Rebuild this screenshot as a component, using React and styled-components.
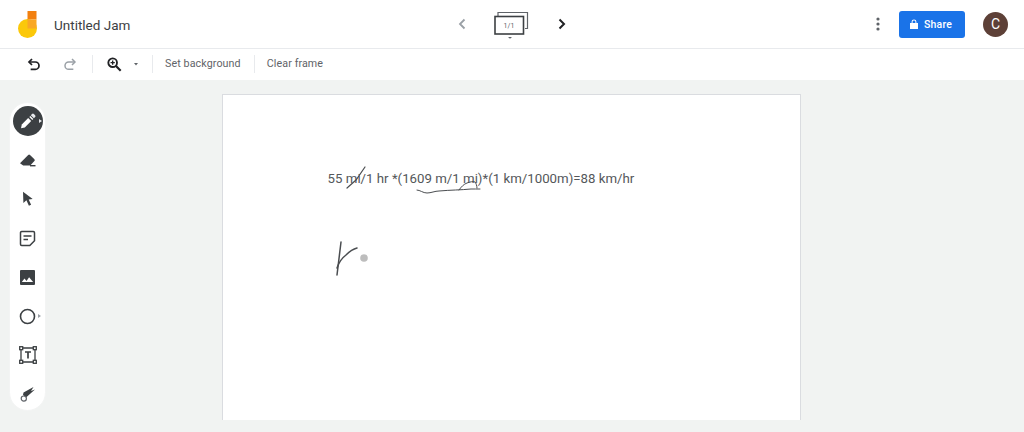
import React from "react";
import styled, { createGlobalStyle } from "styled-components";

const Global = createGlobalStyle`
  html, body { margin: 0; padding: 0; background: #f1f3f2; }
  body { font-family: Roboto, "Liberation Sans", sans-serif; overflow: hidden; }
`;
const Page = styled.div`
  width: 1024px; height: 432px; display: flex; flex-direction: column; overflow: hidden;
`;
const Header = styled.header`
  height: 48px; flex: none; background: #fff; border-bottom: 1px solid #e8eaed;
  display: grid; grid-template-columns: 1fr auto 1fr; align-items: center;
`;
const Brand = styled.div`display: flex; align-items: center; padding-left: 18px;`;
const Title = styled.div`font-size: 13.5px; color: #3c4043; margin-left: 17px; line-height: 20px; margin-top: 1px;`;
const Pager = styled.div`display: flex; align-items: center; margin-right: 1px;`;
const Right = styled.div`display: flex; align-items: center; justify-content: flex-end; padding-right: 16px;`;
const ShareButton = styled.div`
  width: 66px; height: 27px; border-radius: 3px; background: #1a73e8; color: #fff; box-sizing: border-box;
  display: flex; align-items: center; justify-content: center; gap: 6px; padding-right: 2px;
  font-size: 10.5px; font-weight: 500; letter-spacing: .2px; margin-left: 19px;
`;
const Avatar = styled.div`
  width: 25px; height: 25px; border-radius: 50%; background: #5d4037; color: #fff;
  display: flex; align-items: center; justify-content: center; font-size: 14px; margin-left: 18px;
`;
const Toolbar = styled.div`
  height: 31px; flex: none; background: #fff; display: flex; align-items: center; padding-left: 24px;
  padding-bottom: 1px; box-sizing: border-box;
`;
const ToolIcon = styled.div`
  width: ${p => p.$w || 20}px; display: flex; justify-content: center; align-items: center;
  margin-right: ${p => p.$mr || 0}px;
`;
const Divider = styled.div`width: 1px; height: 18px; background: #e8eaed; margin: 0 ${p => p.$r ?? 12}px 0 ${p => p.$l ?? 12}px;`;
const TextAction = styled.div`font-size: 10.7px; color: #5f6368; letter-spacing: .1px; line-height: 16px;`;
const Workspace = styled.main`
  flex: 1; display: flex; align-items: flex-start; background: #f1f3f2; min-height: 0;
`;
const Dock = styled.aside`
  width: 37px; height: 309px; margin: 22px 0 0 9px; flex: none; background: #fff;
  border-radius: 19px; display: flex; flex-direction: column; align-items: center;
  box-sizing: border-box; border: 1px solid #f3f4f4;
`;
const DockItem = styled.div`
  position: relative; width: 30px; height: 30px; margin-top: ${p => p.$first ? 3 : 9}px;
  border-radius: 50%; background: ${p => p.$active ? "#3c4043" : "transparent"};
  display: flex; align-items: center; justify-content: center; flex: none;
`;
const Caret = styled.span`
  position: absolute; right: ${p => p.$r ?? -1}px; top: 13px; width: 0; height: 0;
  border-left: 3px solid ${p => p.$c || "#9aa0a6"}; border-top: 2px solid transparent; border-bottom: 2px solid transparent;
`;
const Canvas = styled.section`
  position: relative; width: 577px; height: 325px; margin: 14px 0 0 176px; flex: none;
  background: #fff; border: 1px solid #dadce0; border-bottom: none; box-sizing: content-box;
`;
const Note = styled.div`
  position: absolute; left: 104.6px; top: 75px; white-space: nowrap;
  font-size: 13.26px; line-height: 18px; color: #54575a;
`;
const Ink = styled.svg`position: absolute; left: 0; top: 0; pointer-events: none;`;

const Logo = () => (
  <svg width="19" height="28" viewBox="0 0 19 28">
    <circle cx="9.5" cy="18.5" r="9.5" fill="#fbc80a" />
    <rect x="9.5" y="1" width="9" height="8.5" fill="#f2800f" />
    <rect x="9.5" y="9.5" width="9" height="9" fill="#f9a825" />
  </svg>
);
const Undo = ({ c }) => (
  <svg width="16" height="16" viewBox="0 0 24 24" fill="none" stroke={c} strokeWidth="2.6">
    <path d="M9 4.5 4.5 9 9 13.5" /><path d="M5 9h9a5.5 5.5 0 0 1 0 11H7" />
  </svg>
);
const Redo = ({ c }) => (
  <svg width="16" height="16" viewBox="0 0 24 24" fill="none" stroke={c} strokeWidth="2.2">
    <path d="M15 4.5 19.5 9 15 13.5" /><path d="M19 9h-9a5.5 5.5 0 0 0 0 11h7" />
  </svg>
);
const Zoom = () => (
  <svg width="16" height="16" viewBox="0 0 24 24" fill="none" stroke="#202124" strokeWidth="2.8">
    <circle cx="10" cy="10" r="6.5" /><path d="m15 15 7 7" strokeWidth="3.2" /><path d="M10 6.8v6.4M6.8 10h6.4" strokeWidth="2" />
  </svg>
);
const Down = () => <svg width="6" height="4" viewBox="0 0 6 4"><path d="M1 1h4L3 3.4z" fill="#5f6368" /></svg>;

const Frames = () => (
  <svg width="36" height="30" viewBox="0 0 36 30" fill="none">
    <path d="M4 5V1.5h29.5v16H31" stroke="#5f6368" strokeWidth="1.2" />
    <rect x="1" y="5.5" width="28.5" height="17.5" fill="#fff" stroke="#3c4043" strokeWidth="1.6" />
    <path d="m14 26h4l-2 1.8z" fill="#5f6368" />
  </svg>
);
const FrameWrap = styled.div`position: relative; width: 36px; height: 30px; margin: 4px 27px 0 27px;`;
const FrameLabel = styled.span`
  position: absolute; left: 1px; width: 29px; top: 7.5px; text-align: center;
  font-size: 7px; line-height: 14px; color: #5f6368;
`;

const Pen = () => (
  <svg width="20" height="20" viewBox="0 0 20 20" fill="#fff">
    <path d="M3 17.2 3.8 13.5l6.4-6.4 3 3-6.4 6.4z" /><path d="m11.3 6 1-1 3 3-1 1z" /><path d="m12.8 4.2 1.2-1.2a1.3 1.3 0 0 1 1.9 0l1.2 1.2a1.3 1.3 0 0 1 0 1.9l-1.2 1.2z" fill="#e8eaed" />
  </svg>
);
const Eraser = () => (
  <svg width="18" height="18" viewBox="0 0 18 18" fill="#3c4043">
    <path d="M1 12.2 9.2 4a1.3 1.3 0 0 1 1.8 0l4.4 4.2a1.3 1.3 0 0 1 0 1.8l-4.2 4.4H4.2z" /><rect x="11" y="14" width="5.5" height="1.4" />
  </svg>
);
const Arrow = () => (
  <svg width="14" height="16" viewBox="0 0 14 16" fill="#3c4043"><path d="M2 .8 2.4 12l3-2.8 2.5 5.6 2.2-1-2.4-5.3 4-.4z" /></svg>
);
const StickyNote = () => (
  <svg width="17" height="17" viewBox="0 0 17 17" fill="none" stroke="#3c4043" strokeWidth="1.5">
    <path d="M2.7 1.5h11.6a1.2 1.2 0 0 1 1.2 1.2v8.1l-4.7 4.7H2.7a1.2 1.2 0 0 1-1.2-1.2V2.7a1.2 1.2 0 0 1 1.2-1.2z" /><path d="M4.5 6h8M4.5 9.5h4.5" />
  </svg>
);
const ImageIcon = () => (
  <svg width="15" height="15" viewBox="0 0 15 15">
    <rect width="15" height="15" rx="1" fill="#3c4043" /><path d="m1.8 12 2.7-3.5 2 2.4 2.6-3.6 4 4.7z" fill="#fff" />
  </svg>
);
const Circle = () => (
  <svg width="17" height="17" viewBox="0 0 17 17" fill="none" stroke="#3c4043" strokeWidth="1.6"><circle cx="8.5" cy="8.5" r="7" /></svg>
);
const TextBox = () => (
  <svg width="18" height="18" viewBox="0 0 18 18" fill="none" stroke="#3c4043" strokeWidth="1.3">
    <path d="M3 2h12M3 16h12M2 3v12M16 3v12" />
    <rect x=".7" y=".7" width="3" height="3" fill="#fff" /><rect x="14.3" y=".7" width="3" height="3" fill="#fff" />
    <rect x=".7" y="14.3" width="3" height="3" fill="#fff" /><rect x="14.3" y="14.3" width="3" height="3" fill="#fff" />
    <path d="M6 6h6M9 6v6.5" strokeWidth="1.7" />
  </svg>
);
const Laser = () => (
  <svg width="18" height="18" viewBox="0 0 18 18">
    <path d="M4.5 7.5 14.5 2l-2.5 4L16 4.6 7 12.5 4 10z" fill="#3c4043" />
    <circle cx="4.8" cy="13.6" r="2.6" fill="none" stroke="#5f6368" strokeWidth="1.2" />
  </svg>
);

export default function App() {
  return (
    <Page>
      <Global />
      <Header>
        <Brand><Logo /><Title>Untitled Jam</Title></Brand>
        <Pager>
          <svg width="10" height="12" viewBox="0 0 10 12" fill="none" stroke="#9aa0a6" strokeWidth="1.8"><path d="M7.5 1.5 3 6l4.5 4.5" /></svg>
          <FrameWrap><Frames /><FrameLabel>1/1</FrameLabel></FrameWrap>
          <svg width="10" height="12" viewBox="0 0 10 12" fill="none" stroke="#202124" strokeWidth="2"><path d="M2.5 1.5 7 6l-4.5 4.5" /></svg>
        </Pager>
        <Right>
          <svg width="4" height="14" viewBox="0 0 4 14" fill="#5f6368"><circle cx="2" cy="2" r="1.6" /><circle cx="2" cy="7" r="1.6" /><circle cx="2" cy="12" r="1.6" /></svg>
          <ShareButton>
            <svg width="8" height="10" viewBox="0 0 8 10" fill="#fff"><path d="M1.6 4V2.8a2.4 2.4 0 0 1 4.8 0V4H8v6H0V4zm1 0h2.8V2.8a1.4 1.4 0 0 0-2.8 0z" /></svg>
            Share
          </ShareButton>
          <Avatar>C</Avatar>
        </Right>
      </Header>
      <Toolbar>
        <ToolIcon $mr={16}><Undo c="#202124" /></ToolIcon>
        <ToolIcon><Redo c="#9aa0a6" /></ToolIcon>
        <Divider $l={12} $r={11} />
        <ToolIcon $mr={9}><Zoom /></ToolIcon>
        <ToolIcon $w={6}><Down /></ToolIcon>
        <Divider $l={13} $r={12} />
        <TextAction>Set background</TextAction>
        <Divider $l={13} $r={12} />
        <TextAction>Clear frame</TextAction>
      </Toolbar>
      <Workspace>
        <Dock>
          <DockItem $first $active><Pen /><Caret $c="#e8eaed" $r={1} /></DockItem>
          <DockItem><Eraser /></DockItem>
          <DockItem><Arrow /></DockItem>
          <DockItem><StickyNote /></DockItem>
          <DockItem><ImageIcon /></DockItem>
          <DockItem><Circle /><Caret $r={2} /></DockItem>
          <DockItem><TextBox /></DockItem>
          <DockItem><Laser /></DockItem>
        </Dock>
        <Canvas>
          <Note>55 mi/1 hr *(1609 m/1 mi)*(1 km/1000m)=88 km/hr</Note>
          <Ink width="577" height="325" viewBox="0 0 577 325" fill="none" stroke="#4a4d50" strokeLinecap="round">
            <path d="M124 93 133 85 142 72" strokeWidth="1.2" />
            <path d="M194 95c3 0 6 3 10 3s8-2 12-2c11-1 22-1 32-2 3 0 6 0 9 0" strokeWidth="1" />
            <path d="M236 95c2-3 5-6 8-7 3-1 6-2 8-1 1 1 2 4 2 6" strokeWidth="1" />
            <path d="M118 147 114 180" strokeWidth="1.5" />
            <path d="M114 173c2-6 5-10 9-13 3-3 7-6 11-7" strokeWidth="1.5" />
            <circle cx="141" cy="163" r="3.8" fill="#bdbdbd" stroke="none" />
          </Ink>
        </Canvas>
      </Workspace>
    </Page>
  );
}
